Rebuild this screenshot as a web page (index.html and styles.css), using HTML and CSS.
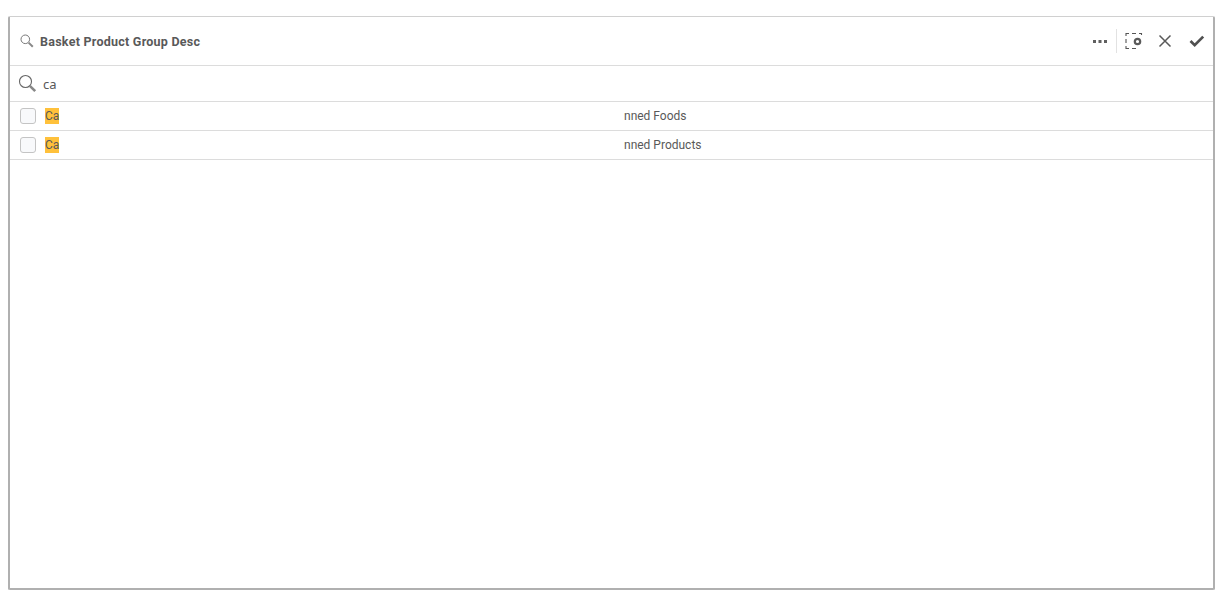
FILE: index.html
```html
<!DOCTYPE html>
<html lang="en">
<head>
<meta charset="utf-8">
<title>Basket Product Group Desc</title>
<link rel="stylesheet" href="styles.css">
</head>
<body>
<section class="panel">
  <header class="head">
    <svg class="head-search" width="14" height="14" viewBox="0 0 14 14"><circle cx="5.3" cy="5.3" r="4.3" fill="none" stroke="#777" stroke-width="1"/><path d="M8.6 8.6l4.2 4.2" stroke="#888" stroke-width="2"/></svg>
    <h1 class="title">Basket Product Group Desc</h1>
    <div class="tools">
      <svg class="tool-more" width="16" height="16" viewBox="0 0 16 16"><rect x="1" y="7" width="3" height="3" fill="#5f5f5f"/><rect x="6.5" y="7" width="3" height="3" fill="#5f5f5f"/><rect x="12" y="7" width="3" height="3" fill="#5f5f5f"/></svg>
      <span class="sep"></span>
      <svg class="tool-sel" width="18" height="18" viewBox="0 0 18 18"><path d="M1 4V1.5H4M7 1.5H11M14 1.5H16.5V3M1 7V11M1 14V16.5H4M7 16.5H11" fill="none" stroke="#555" stroke-width="1.1"/><circle cx="12.5" cy="9.5" r="2.7" fill="none" stroke="#5a5a5a" stroke-width="2.2"/></svg>
      <svg class="tool-x" width="14" height="14" viewBox="0 0 14 14"><path d="M1.5 1.5l11 11M12.5 1.5l-11 11" stroke="#595959" stroke-width="1.5"/></svg>
      <svg class="tool-ok" width="16" height="14" viewBox="0 0 16 14"><path d="M1.5 7l4.2 4.2L14.2 2.6" fill="none" stroke="#505050" stroke-width="2.7"/></svg>
    </div>
  </header>
  <div class="search">
    <svg width="19" height="19" viewBox="0 0 19 19"><circle cx="7.5" cy="7.5" r="6" fill="none" stroke="#666" stroke-width="1.1"/><path d="M11.8 11.8l5.4 5.4" stroke="#888" stroke-width="2.6"/></svg>
    <span class="query">ca</span>
  </div>
  <ul class="list">
    <li class="row"><span class="cell"><span class="check"></span><mark class="hit">Ca</mark></span><span class="rest">nned Foods</span></li>
    <li class="row"><span class="cell"><span class="check"></span><mark class="hit">Ca</mark></span><span class="rest">nned Products</span></li>
  </ul>
</section>
</body>
</html>
```
FILE: styles.css
```css
* { box-sizing: border-box; }
html, body { height: 100%; }
body {
  margin: 0;
  padding: 16px 8px 11px;
  background: #fff;
  font-family: "Noto Sans", "Liberation Sans", sans-serif;
  color: #595959;
  overflow: hidden;
}
.panel {
  height: 574px;
  background: #fff;
  border: 2px solid #b0b0b0;
  border-top: 1px solid #d0d0d0;
  border-radius: 2px;
}
.head {
  display: flex;
  align-items: center;
  height: 49px;
  padding: 0 8px 0 10px;
  border-bottom: 1px solid #dcdcdc;
}
.head-search { flex: none; margin-right: 6px; }
.title {
  margin: 0;
  font-family: Roboto, "Liberation Sans", sans-serif;
  font-size: 12.5px;
  font-weight: 700;
  letter-spacing: 0.25px;
  color: #595959;
  flex: 1;
}
.tools { display: flex; align-items: center; }
.tool-more { margin-right: 8px; }
.sep { width: 1px; height: 24px; background: #e2e2e2; margin-right: 8px; }
.tool-sel { margin-right: 15px; }
.tool-x { margin-right: 17px; }
.search {
  display: flex;
  align-items: center;
  height: 36px;
  padding: 0 0 0 8px;
  border-bottom: 1px solid #dcdcdc;
}
.query { margin-left: 6px; font-size: 13px; color: #595959; }
.list { list-style: none; margin: 0; padding: 0; }
.row {
  display: grid;
  grid-template-columns: 614px 1fr;
  align-items: center;
  height: 29px;
  border-bottom: 1px solid #dcdcdc;
  font-family: Roboto, "Liberation Sans", sans-serif;
  font-size: 12px;
  color: #595959;
}
.cell { display: flex; align-items: center; padding-left: 10px; }
.check {
  width: 16px;
  height: 16px;
  border: 1px solid #c4c4c4;
  border-radius: 3px;
  background: #f8f9fb;
  margin-right: 9px;
}
.hit { background: #ffc13b; color: #595959; line-height: 16px; }
```
